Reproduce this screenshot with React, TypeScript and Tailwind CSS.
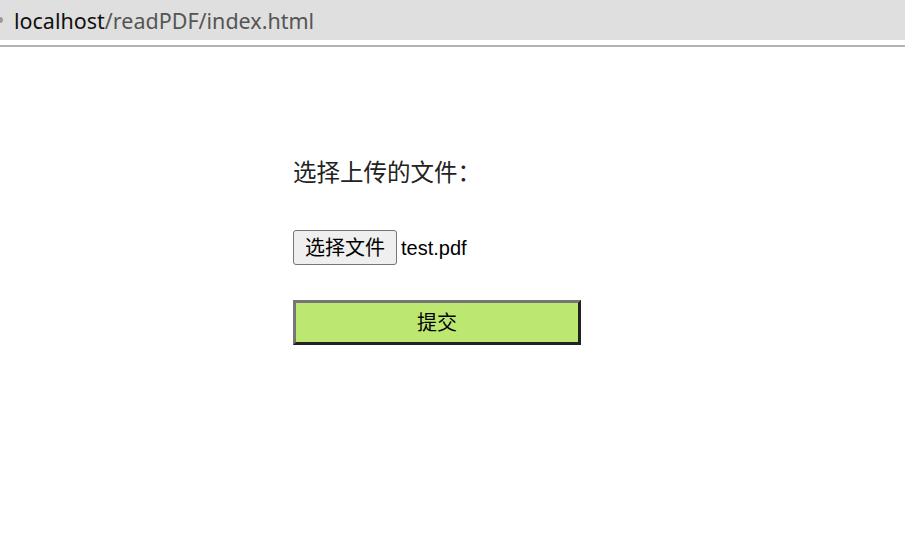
export default function App() {
  return (
    <div className="w-[905px] h-[535px] bg-white overflow-hidden relative">
      <div className="h-[40px] bg-[#dfdfdf] flex items-center relative">
        <div className="absolute left-[-3px] top-[17px] w-[6px] h-[6px] rounded-full bg-[#9a9a9a]" />
        <div
          className="pl-[14px] pt-[1px] text-[21.5px] leading-[24px] text-[#555555]"
          style={{ fontFamily: '"Noto Sans", "Open Sans", sans-serif' }}
        >
          <span className="text-[#111111]">localhost</span>/readPDF/index.html
        </div>
      </div>
      <div className="h-[5px]" />
      <div className="h-[2px] bg-[#b4b4b4]" />
      <div className="pl-[293px] pt-[112px]">
        <div
          className="text-[23.5px] leading-[28px] text-[#222222] h-[28px]"
          style={{ fontFamily: '"Liberation Serif", "Noto Sans CJK SC", serif' }}
        >
          选择上传的文件：
        </div>
        <div
          className="mt-[43px] flex items-center gap-[4px]"
          style={{ fontFamily: '"Liberation Sans", "Noto Sans CJK SC", sans-serif' }}
        >
          <button className="w-[104px] h-[35px] border border-[#767676] rounded-[3px] bg-[#efefef] text-[20px] leading-[24px] text-black flex items-center justify-center">
            选择文件
          </button>
          <span className="text-[20px] leading-[24px] text-black">test.pdf</span>
        </div>
        <button
          className="mt-[35px] w-[288px] h-[45px] bg-[#bce872] border-[3px] border-t-[#767676] border-l-[#767676] border-b-[#222222] border-r-[#222222] text-[20px] leading-[24px] text-black flex items-center justify-center"
          style={{ fontFamily: '"Liberation Sans", "Noto Sans CJK SC", sans-serif' }}
        >
          提交
        </button>
      </div>
    </div>
  );
}
